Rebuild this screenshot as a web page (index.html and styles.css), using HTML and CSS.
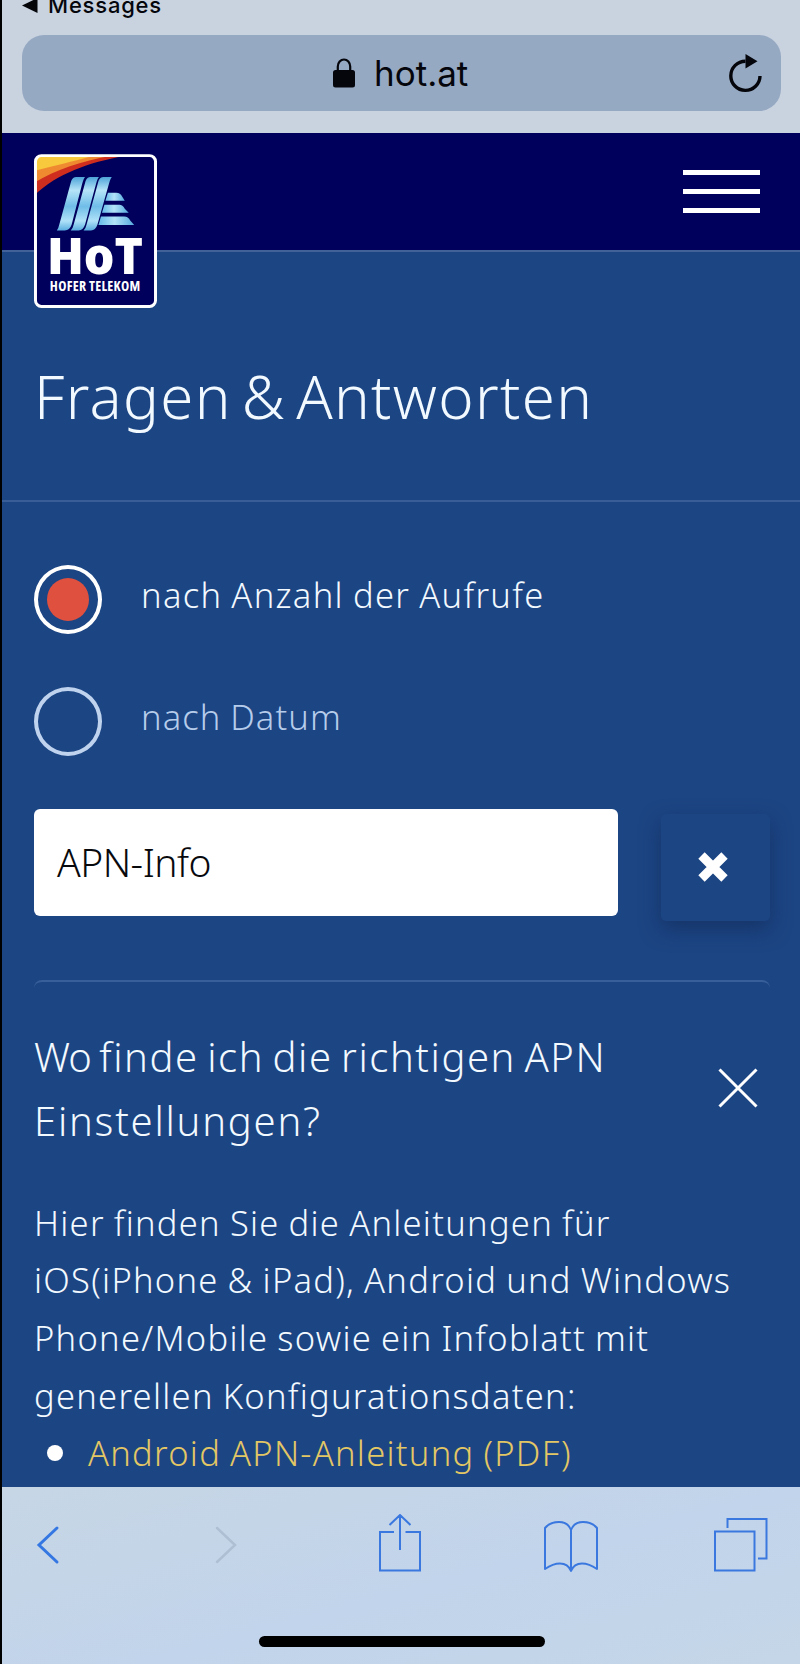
FILE: index.html
```html
<!DOCTYPE html>
<html lang="de">
<head>
<meta charset="utf-8">
<title>HoT – Fragen &amp; Antworten</title>
<link rel="stylesheet" href="styles.css">
</head>
<body>
<div class="browser-top">
  <div class="back-app">
    <svg width="16" height="15" viewBox="0 0 16 15"><path d="M0 7.500 15.500 0V15Z" fill="#05060a"/></svg>
    <span>Messages</span>
  </div>
  <div class="url-bar">
    <svg class="lock" width="22" height="30" viewBox="0 0 22 30"><rect y="12" width="22" height="17.500" rx="2.500" fill="#05060c"/><path d="M4.800 13V8.500a6.200 7 0 0 1 12.400 0V13" fill="none" stroke="#05060c" stroke-width="2.200"/></svg>
    <span class="host">hot.at</span>
    <svg class="reload" width="34" height="40" viewBox="0 0 34 40"><path d="M16.500 8.200A14.600 14.600 0 1 0 31 23" fill="none" stroke="#05060c" stroke-width="3.400"/><path d="M16.500 1 28.500 8.200 16.500 15.500Z" fill="#05060c"/></svg>
  </div>
</div>
<header class="site-header">
  <svg class="logo" width="123" height="154" viewBox="0 0 124 155">
    <defs>
      <linearGradient id="bar" x1="0" y1="0" x2="0" y2="1"><stop offset="0" stop-color="#4da3d8"/><stop offset=".25" stop-color="#b5e4f8"/><stop offset=".55" stop-color="#6fbde8"/><stop offset=".82" stop-color="#b0e2f8"/><stop offset="1" stop-color="#5aade0"/></linearGradient>
      <linearGradient id="step" x1="0" y1="0" x2="1" y2="0"><stop offset="0" stop-color="#66bbe9"/><stop offset=".45" stop-color="#b3e3f8"/><stop offset="1" stop-color="#55a9de"/></linearGradient>
      <clipPath id="card"><rect x="2" y="2" width="120" height="151" rx="5"/></clipPath>
    </defs>
    <rect x="1.500" y="1.500" width="121" height="152" rx="6" fill="#00005c"/>
    <g clip-path="url(#card)">
      <path d="M0 0H102C62 6 24 18 0 42Z" fill="#cf2e1e"/>
      <path d="M0 0H88C55 5 24 14 0 29Z" fill="#f08a31"/>
      <path d="M0 0H66C44 6 20 12 0 17Z" fill="#f8c93c"/>
    </g>
    <g fill="url(#bar)">
      <path d="M51.500 23H42.500Q39 23 37.500 27L25.500 71Q24.500 75.500 23 77H31Q36 77 38 71L48.500 30Q50 24.500 51.500 23Z"/>
      <path d="M65.500 23H57Q53.500 23 52 27L40 71Q39 75.500 37 77H45Q49.500 77 51.500 71L62.500 30Q64 24.500 65.500 23Z"/>
      <path d="M78.500 23H70Q66.500 23 65 27L53 71Q52 75.500 50 77H57.500Q62 77 64 71L75.500 30Q77 24.500 78.500 23Z"/>
    </g>
    <g fill="url(#step)">
      <path d="M74.500 39H83Q87 39 89 43L91.500 47H72Z"/>
      <path d="M71 51H86Q89.500 51 91.500 55L95.500 59H68.500Z"/>
      <path d="M67.500 63H91Q95 63 97 67L101 71.500H65Z"/>
    </g>
    <text class="logo-name" x="13" y="121" textLength="97" lengthAdjust="spacingAndGlyphs">HoT</text>
    <text class="logo-sub" x="16" y="137.500" textLength="91" lengthAdjust="spacing">HOFER TELEKOM</text>
    <rect x="1.500" y="1.500" width="121" height="152" rx="6" fill="none" stroke="#fff" stroke-width="3"/>
  </svg>
  <div class="menu"><i></i><i></i><i></i></div>
</header>
<section class="hero"><h1>Fragen &amp; Antworten</h1></section>
<main>
  <div class="option on"><span class="radio"><i></i></span><span class="label">nach Anzahl der Aufrufe</span></div>
  <div class="option"><span class="radio"></span><span class="label">nach Datum</span></div>
  <div class="search">
    <div class="field">APN-Info</div>
    <div class="clear"><svg width="32" height="32" viewBox="0 0 32 32"><path d="M4.500 4.500 27.500 27.500M27.500 4.500 4.500 27.500" stroke="#fff" stroke-width="9"/></svg></div>
  </div>
  <article>
    <div class="question">
      <h2><span class="first"><span class="tight">Wo</span> finde ich die richtigen APN</span><br>Einstellungen?</h2>
      <svg width="40" height="40" viewBox="0 0 40 40"><path d="M1.500 1.500 38.500 38.500M38.500 1.500 1.500 38.500" stroke="#fff" stroke-width="3"/></svg>
    </div>
    <p>Hier finden Sie die Anleitungen für<br>iOS(iPhone &amp; iPad), Android und Windows<br>Phone/Mobile sowie ein Infoblatt mit<br>generellen Konfigurationsdaten:</p>
    <ul><li><a>Android APN-Anleitung (PDF)</a></li></ul>
  </article>
</main>
<footer class="browser-bottom">
  <nav>
    <svg width="24" height="60" viewBox="0 0 24 60"><path d="M21 14 3 31 21 48" fill="none" stroke="#3577e2" stroke-width="3" stroke-linecap="round"/></svg>
    <svg width="24" height="60" viewBox="0 0 24 60"><path d="M2 14 20 31 2 48" fill="none" stroke="#afbfd3" stroke-width="2.500" stroke-linecap="round"/></svg>
    <svg width="42" height="60" viewBox="0 0 42 60"><path d="M15 18H1V56.500H41V18H26.500M21 36V2M10.500 11 21 1 31.500 11" fill="none" stroke="#3a78df" stroke-width="2"/></svg>
    <svg width="54" height="60" viewBox="0 0 54 60"><path d="M27 57V16Q24 8 15 8 6 8 1 14V55Q9 49.500 16 49.500 24 49.500 27 57 30 49.500 38 49.500 45 49.500 53 55V14Q48 8 39 8 30 8 27 16" fill="none" stroke="#3a78df" stroke-width="2" stroke-linejoin="round"/></svg>
    <svg width="54" height="60" viewBox="0 0 54 60"><path d="M1 17.500H40.500V56.500H1ZM13.500 14V5H52.500V44.500H44" fill="none" stroke="#3a78df" stroke-width="2"/></svg>
  </nav>
  <div class="home"></div>
</footer>
</body>
</html>
```
FILE: styles.css
```css
* { box-sizing: border-box; }
body {
  margin: 0;
  width: 800px;
  height: 1664px;
  overflow: hidden;
  display: flex;
  flex-direction: column;
  border-left: 2px solid #000;
  background: #1c4583;
  color: #f2f9ff;
  font-family: "Noto Sans", sans-serif;
  font-weight: 300;
}
svg { display: block; flex: none; }

.browser-top {
  height: 133px;
  flex: none;
  background: #c9d3e0;
  color: #05060c;
  font-family: Inter, sans-serif;
  font-weight: 400;
  padding-left: 20px;
}
.back-app {
  display: flex;
  align-items: center;
  gap: 10px;
  height: 10px;
  margin-bottom: 25px;
  font-size: 22px;
  font-weight: 500;
  letter-spacing: .8px;
}
.back-app span { line-height: 20px; }
.url-bar {
  width: 759px;
  height: 76px;
  border-radius: 22px;
  background: #96a9c2;
  display: flex;
  align-items: center;
}
.lock { margin-left: 311px; }
.host { margin: 0 0 1px 19px; width: 111px; font-size: 35px; line-height: 44px; }
.reload { margin-left: 244px; }

.site-header {
  height: 119px;
  flex: none;
  background: #00005c;
  border-bottom: 2px solid #426198;
  display: flex;
  justify-content: space-between;
  padding: 21px 40px 0 32px;
}
.logo-name { font: 900 50px "Noto Sans", sans-serif; fill: #fff; }
.logo-sub { font: 700 14px "Open Sans", sans-serif; font-stretch: 75%; fill: #fff; }
.menu { width: 77px; padding-top: 16px; display: flex; flex-direction: column; gap: 14px; }
.menu i { height: 5px; background: #fff; }

.hero {
  height: 250px;
  flex: none;
  border-bottom: 2px solid #385d97;
  padding: 103px 0 0 32px;
}
h1 { margin: 0; font-weight: 300; font-size: 60px; line-height: 82px; letter-spacing: 1.35px; word-spacing: -7px; white-space: nowrap; }

main { height: 985px; flex: none; padding: 63px 30px 0 32px; }
.option { display: flex; height: 122px; font-size: 34.5px; line-height: 60px; letter-spacing: 1.1px; word-spacing: -1.3px; color: #b6cceb; }
.option.on { color: #f2f9ff; letter-spacing: 1.33px; }
.radio { width: 68px; height: 69px; flex: none; border: 4.5px solid #bfd3ef; border-radius: 50%; margin-right: 39px; display: flex; align-items: center; justify-content: center; }
.on .radio { border-color: #fff; }
.radio i { width: 42px; height: 43px; border-radius: 50%; background: #df503e; }
.label { height: 60px; }

.search { display: flex; justify-content: space-between; height: 171px; }
.field { width: 584px; height: 107px; background: #fff; border-radius: 6px; color: #08090d; font-size: 39px; line-height: 106px; padding-left: 23px; letter-spacing: -.5px; }
.clear { width: 109px; height: 107px; margin-top: 5px; padding: 0 6px 2px 0; border-radius: 5px; box-shadow: 0 8px 20px rgba(15, 35, 80, .5); background: #1c4583; display: flex; align-items: center; justify-content: center; }

article { border-top: 2px solid #385f99; border-radius: 8px 8px 0 0; padding-top: 43px; }
.question { display: flex; justify-content: space-between; align-items: flex-start; }
.question svg { margin: 43px 12px 0 0; }
h2 { margin: 0 0 40.500px; font-weight: 300; font-size: 40px; line-height: 64px; letter-spacing: 1.78px; white-space: nowrap; }
.first { letter-spacing: 1.57px; word-spacing: -3.5px; }
.tight { letter-spacing: -1px; }
p, ul { margin: 0; font-size: 34.5px; line-height: 57.700px; letter-spacing: 1.28px; word-spacing: -1.3px; white-space: nowrap; }
ul { list-style: none; padding: 0; }
li { display: flex; align-items: center; }
li::before { content: ""; width: 16px; height: 16px; border-radius: 50%; background: #fff; margin: 0 25px 0 13px; }
a { color: #e3c765; }

.browser-bottom {
  height: 177px;
  flex: none;
  background: linear-gradient(165deg, #c6d6e5 0%, #c2d4eb 55%, #c4d6e7 100%);
  display: flex;
  flex-direction: column;
}
nav { display: flex; justify-content: space-between; padding: 27px 32px 0 34px; height: 149px; }
nav svg:nth-child(2) { margin-left: 90px; }
nav svg:nth-child(3) { margin-left: 75px; }
nav svg:nth-child(4) { margin-left: 59px; }
nav svg:nth-child(5) { margin-left: 51px; }
.home { width: 286px; height: 11px; border-radius: 6px; background: #000; margin-left: 257px; }
```
